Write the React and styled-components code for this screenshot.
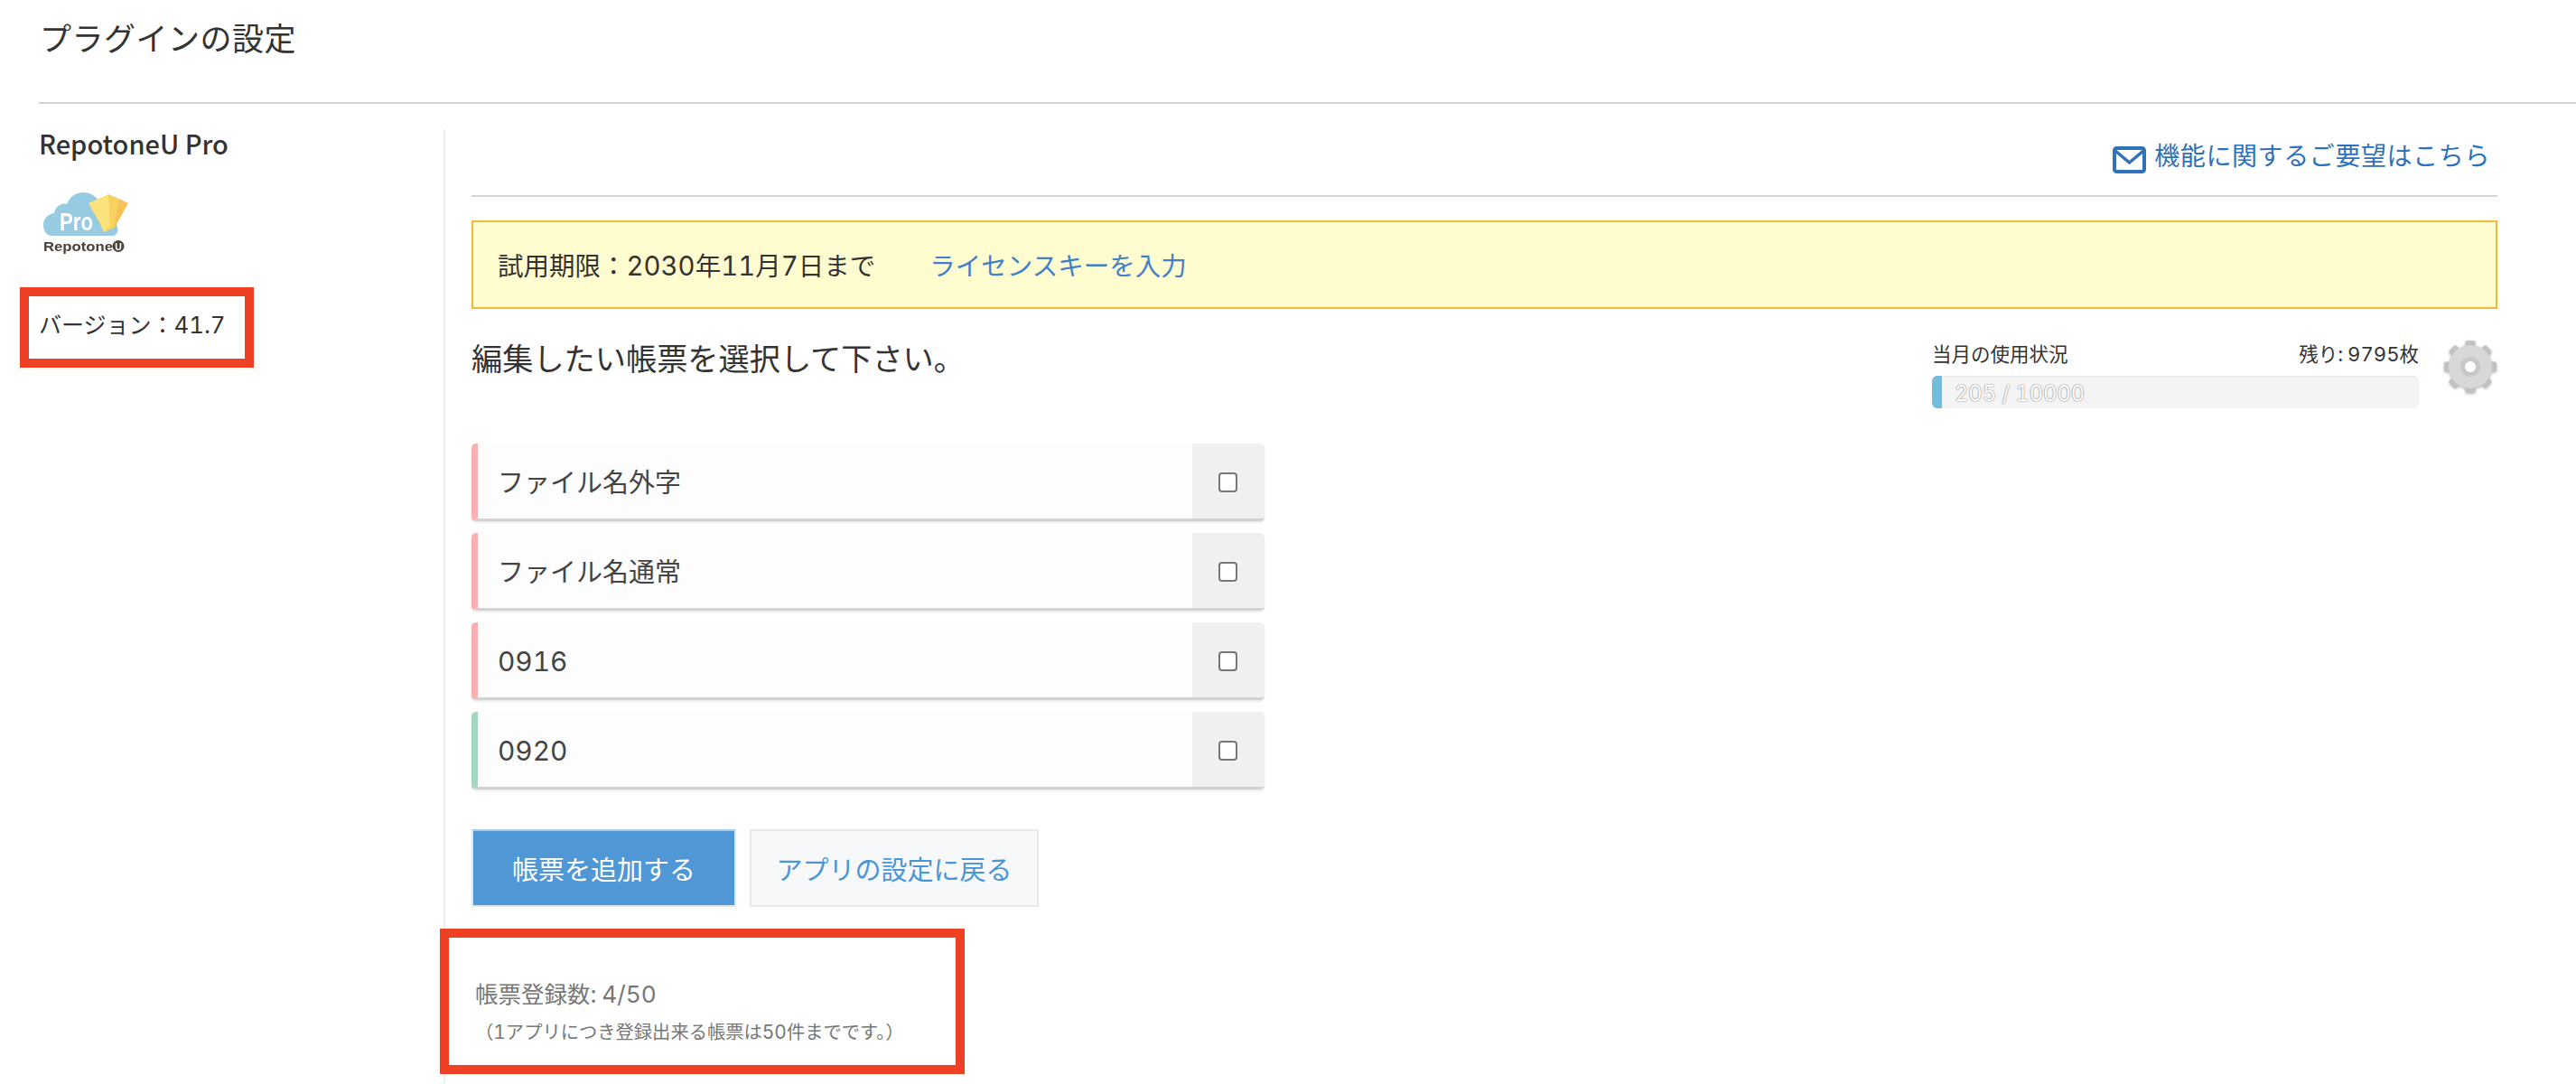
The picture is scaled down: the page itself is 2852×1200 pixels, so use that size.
import React from "react";
import styled, { createGlobalStyle } from "styled-components";

const Global = createGlobalStyle`
  html, body { margin: 0; padding: 0; background: #fff; }
  body { font-family: "Noto Sans CJK JP", "Noto Sans", sans-serif; color: #333; }
  * { box-sizing: border-box; }
`;

const Page = styled.div`
  position: relative;
  width: 2852px;
  height: 1200px;
  overflow: hidden;
  background: #fff;
`;
const Header = styled.header`
  height: 115px;
  margin-left: 43px;
  padding: 18px 0 0 1px;
  border-bottom: 2px solid #d4d4d4;
`;
const Title = styled.h1`
  margin: 0;
  font-size: 35px;
  line-height: 46px;
  font-weight: 400;
  letter-spacing: 0.5px;
  color: #333;
`;
const Body = styled.div`
  display: flex;
  margin: 28px 87px 0 43px;
`;
const Sidebar = styled.aside`
  position: relative;
  width: 450px;
  height: 1060px;
  flex: none;
  border-right: 2px solid #ececec;
`;
const PluginName = styled.div`
  font-size: 29px;
  line-height: 36px;
  font-weight: 500;
  color: #333;
  margin-top: -3px;
`;
const LogoWrap = styled.div`
  width: 96px;
  height: 72px;
  margin: 36px 0 0 5px;
  svg { display: block; filter: blur(0.6px); }
`;
const Version = styled.div`
  font-size: 25px;
  line-height: 36px;
  margin-top: 56px;
  color: #333;
`;
const Num = styled.span`
  font-family: Inter, "Liberation Sans", sans-serif;
  font-size: 1.03em;
  font-variant-numeric: tabular-nums;
`;
const Mark = styled.div`
  position: absolute;
  border: 10px solid #ee4025;
  pointer-events: none;
`;
const VersionMark = styled(Mark)`
  left: -21px;
  top: 175px;
  width: 259px;
  height: 89px;
`;
const Main = styled.main`
  position: relative;
  flex: 1;
  padding-left: 29px;
`;
const TopBar = styled.div`
  display: flex;
  justify-content: flex-end;
  align-items: flex-start;
  height: 75px;
  padding: 10px 8px 0 0;
  border-bottom: 2px solid #d4d4d4;
`;
const RequestLink = styled.a`
  display: flex;
  align-items: flex-start;
  gap: 9px;
  color: #2e72bb;
  font-size: 28px;
  line-height: 36px;
  letter-spacing: 0.6px;
  svg { margin-top: 9px; flex: none; }
`;
const Notice = styled.div`
  display: flex;
  align-items: center;
  height: 98px;
  margin-top: 26px;
  padding: 0 0 2px 27px;
  background: #fffdd0;
  border: 2px solid #f5b93a;
  font-size: 28.5px;
  color: #333;
`;
const LicenseLink = styled.a`
  margin-left: 60px;
  color: #3f80c9;
`;
const SelectRow = styled.div`
  display: flex;
  justify-content: space-between;
  align-items: flex-start;
  margin-top: 34px;
  height: 115px;
`;
const Lead = styled.div`
  font-size: 34.2px;
  line-height: 48px;
  color: #333;
  margin-top: -5px;
`;
const UsageGroup = styled.div`
  display: flex;
  align-items: flex-start;
  gap: 27px;
`;
const Usage = styled.div`
  width: 539px;
  padding-top: 1px;
`;
const UsageHead = styled.div`
  display: flex;
  justify-content: space-between;
  font-size: 21.5px;
  line-height: 28px;
  color: #333;
`;
const Bar = styled.div`
  position: relative;
  display: flex;
  align-items: center;
  white-space: pre;
  height: 36px;
  margin-top: 10px;
  padding-left: 25px;
  background: #f4f4f4;
  border-radius: 6px;
  overflow: hidden;
  box-shadow: inset 0 1px 2px rgba(0, 0, 0, 0.06);
  font-size: 23px;
  color: #fff;
  text-shadow: 0 0 1.5px #777, 0 0 1px #888;
`;
const BarFill = styled.div`
  position: absolute;
  left: 0;
  top: 0;
  bottom: 0;
  background: #73bddc;
`;
const GearIcon = styled.svg`
  display: block;
  flex: none;
  filter: drop-shadow(0 1px 1.5px rgba(0, 0, 0, 0.3));
`;
const List = styled.div`
  display: flex;
  flex-direction: column;
  gap: 13px;
  width: 878px;
`;
const Row = styled.div`
  display: flex;
  height: 86px;
  border-radius: 5px;
  overflow: hidden;
  border-left: 7px solid ${(p) => p.$accent};
  border-bottom: 3px solid #d2d2d2;
  background: #fdfdfd;
  box-shadow: 0 2px 2px rgba(0, 0, 0, 0.08);
`;
const RowName = styled.div`
  flex: 1;
  display: flex;
  align-items: center;
  padding: 0 0 1px 22px;
  font-size: 29px;
  color: #444;
`;
const RowCheck = styled.div`
  width: 80px;
  display: flex;
  align-items: center;
  justify-content: center;
  padding: 2px 2px 0 0;
  background: #f0f0f0;
`;
const Check = styled.input`
  appearance: none;
  width: 21px;
  height: 22px;
  margin: 0;
  background: #fff;
  border: 2px solid #777;
  border-radius: 4px;
`;
const Buttons = styled.div`
  display: flex;
  gap: 15px;
  margin-top: 44px;
`;
const Button = styled.button`
  height: 86px;
  font-family: inherit;
  font-size: 29px;
  padding: 0;
`;
const PrimaryButton = styled(Button)`
  width: 293px;
  color: #fff;
  background: #5097d5;
  border: 2px solid #dfe6ee;
  border-top-color: #a9cbe9;
`;
const SecondaryButton = styled(Button)`
  width: 320px;
  color: #4a95d6;
  background: #f7f8fa;
  border: 2px solid #e8e8e8;
`;
const CountBlock = styled.div`
  position: relative;
  margin-top: 77px;
  padding-left: 4px;
  color: #777;
`;
const CountLine = styled.div`
  font-size: 25.5px;
  line-height: 36px;
`;
const CountNote = styled.div`
  font-size: 20.3px;
  line-height: 30px;
  margin-top: 7px;
`;
const CountMark = styled(Mark)`
  left: -35px;
  top: -53px;
  width: 581px;
  height: 161px;
`;

const withNums = (text) =>
  text.split(/([\d][\d./ ]*[\d]|\d)/).map((part, i) =>
    i % 2 ? <Num key={i}>{part}</Num> : part
  );

const Gear = () => {
  const teeth = [0, 45, 90, 135, 180, 225, 270, 315];
  return (
    <GearIcon width="60" height="60" viewBox="0 0 60 60">
      {teeth.map((a) => (
        <rect key={a} x="24.5" y="1" width="11" height="12" rx="2" fill="#c2c2c2" transform={`rotate(${a} 30 30)`} />
      ))}
      <circle cx="30" cy="30" r="24" fill="#d8d8d8" />
      <circle cx="30" cy="30" r="11" fill="#c8c8c8" />
      <circle cx="30" cy="30" r="6" fill="#fff" />
    </GearIcon>
  );
};

const Logo = () => (
  <svg width="96" height="72" viewBox="0 0 96 72">
    <path d="M10 49C3 49 0 43 0 37C0 30 5 25 12 24C13 17 20 12 26 14C29 6 36 1 44 1C52 1 58 5 62 11C68 10 76 14 78 22L82 40C84 45 80 49 76 49Z" fill="#97cbe2" />
    <text x="18" y="43" fontFamily="Liberation Sans, sans-serif" fontWeight="700" fontSize="28" fill="#fff" textLength="37" lengthAdjust="spacingAndGlyphs">Pro</text>
    <path d="M84 8L94 13L79 40L66 45Z" fill="#f5c358" />
    <path d="M72 3L84 8L78 40L67 45Z" fill="#f8d25e" />
    <path d="M50 13L72 3L74 38L67 45L62 34Z" fill="#fbe27a" />
    <text x="0" y="66" fontFamily="Liberation Sans, sans-serif" fontWeight="700" fontSize="14.5" fill="#4a4238" textLength="77" lengthAdjust="spacingAndGlyphs">Repotone</text>
    <circle cx="83" cy="60.5" r="6.5" fill="#4a4238" />
    <text x="83" y="64.5" textAnchor="middle" fontFamily="Liberation Sans, sans-serif" fontWeight="700" fontSize="10.5" fill="#fff">U</text>
  </svg>
);

const Mail = () => (
  <svg width="37" height="30" viewBox="0 0 37 30" fill="none">
    <rect x="2" y="2" width="33" height="26" rx="2.5" stroke="#2e72bb" strokeWidth="4" />
    <path d="M3 5 L18.5 18 L34 5" stroke="#2e72bb" strokeWidth="3.5" />
  </svg>
);

const forms = [
  { name: "ファイル名外字", accent: "#f9b0b0" },
  { name: "ファイル名通常", accent: "#f9b0b0" },
  { name: "0916", accent: "#f9b0b0" },
  { name: "0920", accent: "#a5d6c0" },
];

export default function App() {
  return (
    <Page>
      <Global />
      <Header>
        <Title>プラグインの設定</Title>
      </Header>
      <Body>
        <Sidebar>
          <PluginName>RepotoneU Pro</PluginName>
          <LogoWrap>
            <Logo />
          </LogoWrap>
          <Version>{withNums("バージョン：41.7")}</Version>
          <VersionMark />
        </Sidebar>
        <Main>
          <TopBar>
            <RequestLink>
              <Mail />
              機能に関するご要望はこちら
            </RequestLink>
          </TopBar>
          <Notice>
            <span>{withNums("試用期限：2030年11月7日まで")}</span>
            <LicenseLink>ライセンスキーを入力</LicenseLink>
          </Notice>
          <SelectRow>
            <Lead>編集したい帳票を選択して下さい。</Lead>
            <UsageGroup>
              <Usage>
                <UsageHead>
                  <span>当月の使用状況</span>
                  <span>{withNums("残り: 9795枚")}</span>
                </UsageHead>
                <Bar>
                  <BarFill style={{ width: `${(205 / 10000) * 100}%` }} />
                  <span>{withNums("205 / 10000")}</span>
                </Bar>
              </Usage>
              <Gear />
            </UsageGroup>
          </SelectRow>
          <List>
            {forms.map((f) => (
              <Row key={f.name} $accent={f.accent}>
                <RowName><span>{withNums(f.name)}</span></RowName>
                <RowCheck>
                  <Check type="checkbox" readOnly />
                </RowCheck>
              </Row>
            ))}
          </List>
          <Buttons>
            <PrimaryButton>帳票を追加する</PrimaryButton>
            <SecondaryButton>アプリの設定に戻る</SecondaryButton>
          </Buttons>
          <CountBlock>
            <CountLine>{withNums("帳票登録数: 4/50")}</CountLine>
            <CountNote>{withNums("（1アプリにつき登録出来る帳票は50件までです。）")}</CountNote>
            <CountMark />
          </CountBlock>
        </Main>
      </Body>
    </Page>
  );
}
